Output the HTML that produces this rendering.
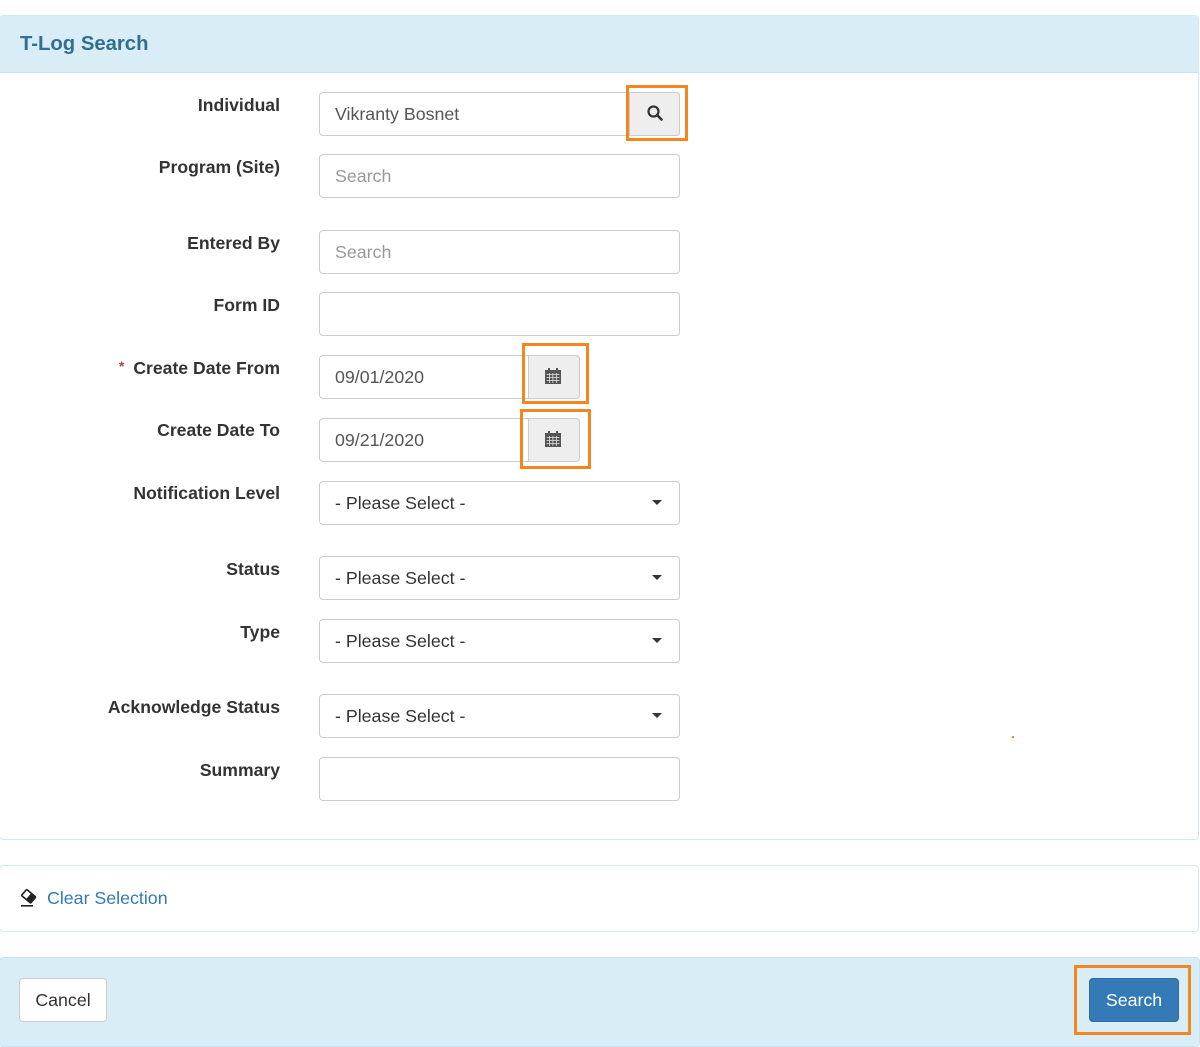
<!DOCTYPE html>
<html><head><style>
*{box-sizing:border-box;margin:0;padding:0}
body{width:1200px;height:1041px;background:#fff;font-family:"Liberation Sans",sans-serif;position:relative;overflow:hidden;color:#333}
.abs{position:absolute}
.panel{position:absolute;left:-1px;width:1200px;border:1px solid #d3e8f1;border-radius:4px;background:#fff}
.lbl{position:absolute;right:920px;font-weight:bold;font-size:17.6px;color:#333;white-space:nowrap}
.inp{position:absolute;left:319px;width:361px;height:44px;border:1px solid #ccc;border-radius:4px;background:#fff;font-size:17.8px;padding:0 15px;line-height:42px;color:#555}
.ph{color:#999}
.caret{position:absolute;right:17px;top:18px;width:0;height:0;border-left:5px solid transparent;border-right:5px solid transparent;border-top:5px solid #333}
.addon{position:absolute;background:#eee;border:1px solid #ccc;border-radius:0 4px 4px 0}
.orange{position:absolute;border:3px solid #f5861f}
</style></head><body>
<div class="panel" style="top:15px;height:825px">
 <div style="height:57px;background:#d9edf7;border-bottom:1px solid #c8e3ef;border-radius:3px 3px 0 0"></div>
</div>
<div class="abs" style="left:20px;top:33px;font-size:20.3px;font-weight:bold;color:#31708f">T-Log Search</div>

<div class="lbl" style="top:95px">Individual</div>
<div class="inp" style="top:92px">Vikranty Bosnet</div>
<div class="addon" style="left:629px;top:92px;width:51px;height:44px"></div>
<svg class="abs" style="left:646px;top:104px" width="18" height="18" viewBox="0 0 18 18"><circle cx="7.5" cy="7.5" r="5" fill="none" stroke="#333" stroke-width="2.2"/><line x1="11" y1="11" x2="15.5" y2="15.5" stroke="#333" stroke-width="2.6" stroke-linecap="round"/></svg>
<div class="orange" style="left:626px;top:85px;width:62px;height:56px"></div>

<div class="lbl" style="top:157px">Program (Site)</div>
<div class="inp ph" style="top:154px">Search</div>
<div class="lbl" style="top:233px">Entered By</div>
<div class="inp ph" style="top:230px">Search</div>
<div class="lbl" style="top:295px">Form ID</div>
<div class="inp" style="top:292px"></div>

<div class="lbl" style="top:358px"><span style="color:#a94442;font-size:14px;vertical-align:top;margin-right:9px">*</span>Create Date From</div>
<div class="inp" style="top:355px;width:261px">09/01/2020</div>
<div class="addon" style="left:528px;top:355px;width:52px;height:44px"></div>
<div class="orange" style="left:522px;top:343px;width:67px;height:61px"></div>
<div class="lbl" style="top:420px">Create Date To</div>
<div class="inp" style="top:418px;width:261px">09/21/2020</div>
<div class="addon" style="left:528px;top:418px;width:52px;height:44px"></div>
<div class="orange" style="left:520px;top:409px;width:71px;height:60px"></div>
<svg class="abs" style="left:544px;top:367px" width="18" height="18" viewBox="0 0 18 18"><rect x="1" y="3" width="16" height="14" fill="#555"/><rect x="4" y="1" width="2" height="4" fill="#555"/><rect x="12" y="1" width="2" height="4" fill="#555"/><g fill="#ddd"><rect x="2.5" y="7" width="13" height="0.8"/><rect x="2.5" y="10" width="13" height="0.8"/><rect x="2.5" y="13" width="13" height="0.8"/><rect x="5" y="6" width="0.8" height="10"/><rect x="8.5" y="6" width="0.8" height="10"/><rect x="12" y="6" width="0.8" height="10"/></g></svg>
<svg class="abs" style="left:544px;top:430px" width="18" height="18" viewBox="0 0 18 18"><rect x="1" y="3" width="16" height="14" fill="#555"/><rect x="4" y="1" width="2" height="4" fill="#555"/><rect x="12" y="1" width="2" height="4" fill="#555"/><g fill="#ddd"><rect x="2.5" y="7" width="13" height="0.8"/><rect x="2.5" y="10" width="13" height="0.8"/><rect x="2.5" y="13" width="13" height="0.8"/><rect x="5" y="6" width="0.8" height="10"/><rect x="8.5" y="6" width="0.8" height="10"/><rect x="12" y="6" width="0.8" height="10"/></g></svg>

<div class="lbl" style="top:483px">Notification Level</div>
<div class="inp" style="top:481px;color:#333">- Please Select -<span class="caret"></span></div>
<div class="lbl" style="top:559px">Status</div>
<div class="inp" style="top:556px;color:#333">- Please Select -<span class="caret"></span></div>
<div class="lbl" style="top:622px">Type</div>
<div class="inp" style="top:619px;color:#333">- Please Select -<span class="caret"></span></div>
<div class="lbl" style="top:697px">Acknowledge Status</div>
<div class="inp" style="top:694px;color:#333">- Please Select -<span class="caret"></span></div>
<div class="lbl" style="top:760px">Summary</div>
<div class="inp" style="top:757px"></div>
<div class="abs" style="left:1012px;top:736px;width:2px;height:2px;background:#f5861f"></div>

<div class="panel" style="top:865px;height:67px"></div>
<svg class="abs" style="left:18px;top:888px" width="20" height="20" viewBox="0 0 20 20"><g transform="rotate(40 10 9)"><rect x="4" y="4" width="12" height="8" rx="1" fill="#fff" stroke="#222" stroke-width="1.6"/><rect x="10" y="4" width="6" height="8" fill="#222"/></g><rect x="3" y="17" width="12" height="1.6" fill="#222"/></svg>
<div class="abs" style="left:47px;top:888px;font-size:17.8px;color:#337ab7">Clear Selection</div>

<div class="abs" style="left:-1px;top:957px;width:1201px;height:90px;background:#d9edf7;border:1px solid #c8e3ef;border-radius:4px"></div>
<div class="abs" style="left:19px;top:978px;width:88px;height:44px;background:#fff;border:1px solid #ccc;border-radius:4px;font-size:17.8px;line-height:42px;text-align:center;color:#333">Cancel</div>
<div class="abs" style="left:1089px;top:978px;width:90px;height:44px;background:#337ab7;border:1px solid #2e6da4;border-radius:4px;font-size:17.8px;line-height:42px;text-align:center;color:#fff">Search</div>
<div class="orange" style="left:1074px;top:965px;width:117px;height:70px"></div>
</body></html>
